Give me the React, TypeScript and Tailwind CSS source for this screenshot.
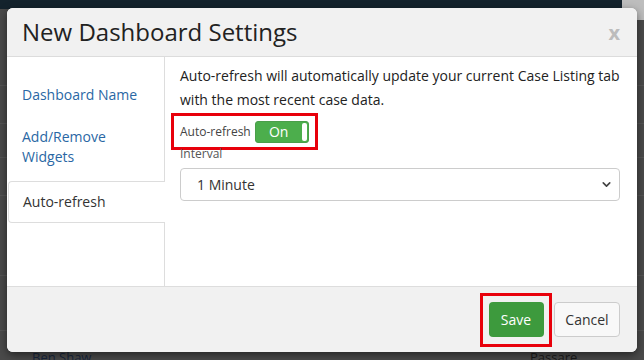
import { ChevronDown } from "lucide-react";

const font = { fontFamily: '"Open Sans", "Noto Sans", sans-serif' };

function NavItem({ label, active }: { label: string; active?: boolean }) {
  if (active) {
    return (
      <div className="mt-[4px] ml-[1px] -mr-px rounded-l-[4px] border border-r-0 border-[#dddddd] bg-white px-[14px] py-[10px] text-[14px] leading-[20px] text-[#333]">
        {label}
      </div>
    );
  }
  return (
    <div className="mt-[2px] px-[15px] py-[10px] text-[14px] leading-[20px] text-[#2a67a4]">
      {label}
    </div>
  );
}

export default function App() {
  return (
    <div
      className="relative h-[360px] w-[644px] overflow-hidden bg-[#4a4a4a]"
      style={font}
    >
      {/* page behind the modal */}
      <div className="h-[9px] bg-[#14232d]" />
      <div className="absolute right-0 top-0 h-[20px] w-[22px] rounded-bl-[3px] bg-[#bdbdbd]" />
      <div className="mt-[76px] border-t border-[#555]" />
      <div className="mt-[37px] border-t border-[#555]" />
      <div className="mt-[33px] border-t border-[#555]" />
      <div className="mt-[37px] border-t border-[#555]" />
      <div className="mt-[79px] border-t border-[#555]" />
      <div className="mt-[54px] border-t border-[#555]" />
      <div className="absolute bottom-[-5px] left-[32px] text-[13px] leading-[16px] text-[#18263d]">
        Ben Shaw
      </div>
      <div className="absolute bottom-[-5px] left-[530px] text-[13px] leading-[16px] text-[#1a1a1a]">
        Passare
      </div>

      {/* modal */}
      <div className="absolute left-[7px] top-[8px] flex h-[344px] w-[630px] flex-col overflow-hidden rounded-[6px] bg-white shadow-[0_3px_9px_rgba(0,0,0,0.5)]">
        <div className="flex h-[49px] items-center justify-between border-b border-[#dcdcdc] bg-[#f1f1f1] pl-[15px] pr-[17px]">
          <h4 className="text-[24px] leading-[30px] text-[#222]">
            New Dashboard Settings
          </h4>
          <span className="mt-[1px] text-[20px] font-bold leading-none text-[#bcbcbc]">
            x
          </span>
        </div>

        <div className="flex h-[229px]">
          <div className="w-[158px] shrink-0 border-r border-[#dddddd] pt-[16px]">
            <NavItem label="Dashboard Name" />
            <NavItem label="Add/Remove Widgets" />
            <NavItem label="Auto-refresh" active />
          </div>
          <div className="flex-1 pl-[15px] pr-[17px] pt-[7px]">
            <p className="text-[14px] leading-[24px] text-[#222]">
              Auto-refresh will automatically update your current Case Listing
              tab with the most recent case data.
            </p>
            <div className="-ml-[9px] mt-[1px] flex h-[37px] w-[147px] items-center border-[3px] border-[#e8000b] pl-[6px]">
              <span className="text-[12px] text-[#444]">Auto-refresh</span>
              <div className="ml-[4px] flex h-[22px] w-[54px] items-center rounded-[3px] border border-[#4a9e4a] bg-[#4cae4c]">
                <span className="flex-1 text-center text-[14px] leading-none text-white">
                  On
                </span>
                <span className="mr-px h-[18px] w-[5px] rounded-[2px] bg-white" />
              </div>
            </div>
            <div className="-mt-[4px] text-[12px] leading-[16px] text-[#555]">
              Interval
            </div>
            <div className="mt-[6px] flex h-[33px] items-center justify-between rounded-[4px] border border-[#cccccc] bg-white pl-[16px] pr-[6px]">
              <span className="text-[14px] text-[#333]">1 Minute</span>
              <ChevronDown size={13} strokeWidth={3} className="text-[#444]" />
            </div>
          </div>
        </div>

        <div className="flex flex-1 items-center justify-end gap-[2px] border-t border-[#dddddd] bg-[#f1f1f1] pr-[17px]">
          <div className="flex h-[54px] w-[72px] items-center justify-center border-[3px] border-[#e8000b]">
            <button className="h-[35px] w-[55px] rounded-[4px] bg-[#3d9a3d] text-[14px] text-white">
              Save
            </button>
          </div>
          <button className="h-[35px] w-[66px] rounded-[4px] border border-[#cccccc] bg-[#f8f8f8] text-[14px] text-[#333]">
            Cancel
          </button>
        </div>
      </div>
    </div>
  );
}
